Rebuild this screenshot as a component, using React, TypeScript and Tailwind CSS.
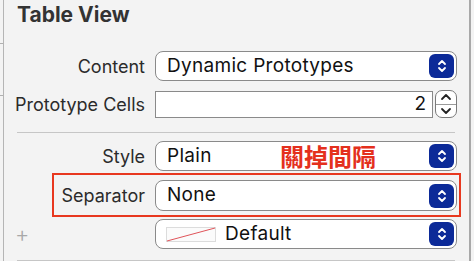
import React from "react";

const Chevrons = () => (
  <svg width="10" height="14" viewBox="0 0 10 14" fill="none">
    <path d="M2 5 L5 2 L8 5" stroke="white" strokeWidth="1.8" strokeLinecap="round" strokeLinejoin="round" />
    <path d="M2 9 L5 12 L8 9" stroke="white" strokeWidth="1.8" strokeLinecap="round" strokeLinejoin="round" />
  </svg>
);

const Popup = ({ children, h = "h-[30px]" }: { children: React.ReactNode; h?: string }) => (
  <div
    className={`relative flex ${h} w-[302px] items-center rounded-[8px] border-[1.5px] border-[#8a8a8a] bg-white pl-[11px] pr-[2px] text-[19px] tracking-[0.3px] text-[#111]`}
  >
    <div className="flex flex-1 items-center">{children}</div>
    <div className="flex h-[24px] w-[25px] items-center justify-center rounded-[6px] bg-[#0c2a98]">
      <Chevrons />
    </div>
  </div>
);

const Label = ({ children, w = "w-[141px]" }: { children: React.ReactNode; w?: string }) => (
  <div className={`${w} text-right text-[18px] text-[#2b2b2b]`}>{children}</div>
);

const App = () => {
  return (
    <div
      className="flex h-[261px] w-[474px] bg-[#f3f3f3]"
      style={{ fontFamily: "Inter, 'Noto Sans', sans-serif" }}
    >
      {/* left edge ticks */}
      <div className="flex w-[3px] flex-col">
        <div className="mt-[43px] h-px bg-[#b0b0b0]" />
        <div className="mt-[51px] h-px bg-[#b0b0b0]" />
      </div>

      <div className="flex w-[466px] flex-col border-l border-[#b5b5b5]">
        {/* title */}
        <div className="pl-[13px] pt-[3px] text-[21px] font-bold leading-[24px] text-[#333]">Table View</div>

        {/* Content */}
        <div className="mt-[24px] flex items-center gap-[10px]">
          <Label>Content</Label>
          <Popup>Dynamic Prototypes</Popup>
        </div>

        {/* Prototype Cells */}
        <div className="mt-[9px] flex items-center gap-[10px]">
          <Label>Prototype Cells</Label>
          <div className="flex items-center gap-[2px]">
            <div className="flex h-[27px] w-[278px] items-center justify-end border border-[#8a8a8a] bg-white pr-[6px] text-[19px] text-[#111]">
              2
            </div>
            <div className="flex h-[28px] w-[22px] flex-col items-center justify-between rounded-[7px] border-[1.5px] border-[#7a7a7a] bg-white py-[2px]">
              <svg width="12" height="8" viewBox="0 0 12 8" fill="none">
                <path d="M2 6 L6 2 L10 6" stroke="#222" strokeWidth="1.8" strokeLinecap="round" strokeLinejoin="round" />
              </svg>
              <div className="h-px w-full bg-[#9a9a9a]" />
              <svg width="12" height="8" viewBox="0 0 12 8" fill="none">
                <path d="M2 2 L6 6 L10 2" stroke="#222" strokeWidth="1.8" strokeLinecap="round" strokeLinejoin="round" />
              </svg>
            </div>
          </div>
        </div>

        <div className="ml-[13px] mr-[14px] mt-[14px] h-px bg-[#c6c6c6]" />

        {/* Style */}
        <div className="mt-[8px] flex items-center gap-[10px]">
          <Label>Style</Label>
          <Popup>
            <span>Plain</span>
            {/* annotation */}
            <span
              className="absolute left-[124px] top-[1px] text-[24px] font-bold leading-[26px] tracking-normal text-[#e4301d]"
              style={{ fontFamily: "'Noto Sans CJK TC', sans-serif" }}
            >
              關掉間隔
            </span>
          </Popup>
        </div>

        {/* Separator (highlighted) */}
        <div className="ml-[48px] mr-[8px] mt-[2px] flex items-center gap-[10px] border-2 border-[#e8381f] pb-[4px] pr-[2px] pt-[5px]">
          <Label w="w-[91px]">Separator</Label>
          <Popup h="h-[31px]">None</Popup>
        </div>

        {/* color */}
        <div className="mt-[2px] flex items-center gap-[10px]">
          <div className="w-[141px] pl-[11px] text-[22px] font-light leading-none text-[#a8a8a8]">+</div>
          <Popup>
            <svg width="50" height="15" viewBox="0 0 50 15" className="mr-[9px] -ml-[1px]">
              <rect x="0.5" y="0.5" width="49" height="14" fill="#fbfbfb" stroke="#dcdcdc" />
              <line x1="1" y1="14" x2="49" y2="1" stroke="#e0545a" strokeWidth="1" />
            </svg>
            <span>Default</span>
          </Popup>
        </div>

        <div className="ml-[13px] mr-[14px] mt-[11px] h-px bg-[#c6c6c6]" />
      </div>

      <div className="w-[2px] bg-[#a8a8a8]" />
    </div>
  );
};

export default App;
